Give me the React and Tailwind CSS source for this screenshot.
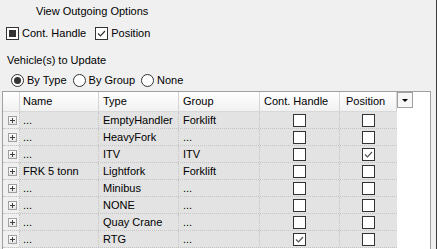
import React from 'react';

const rows = [
    { name: '...', type: 'EmptyHandler', group: 'Forklift', cont: false, pos: false },
    { name: '...', type: 'HeavyFork', group: '...', cont: false, pos: false },
    { name: '...', type: 'ITV', group: 'ITV', cont: false, pos: true },
    { name: 'FRK 5 tonn', type: 'Lightfork', group: 'Forklift', cont: false, pos: false },
    { name: '...', type: 'Minibus', group: '...', cont: false, pos: false },
    { name: '...', type: 'NONE', group: '...', cont: false, pos: false },
    { name: '...', type: 'Quay Crane', group: '...', cont: false, pos: false },
    { name: '...', type: 'RTG', group: '...', cont: true, pos: false },
];

const Check = ({ color = '#333' }) => (
    <svg width="11" height="11" viewBox="0 0 11 11" className="block">
        <path d="M2 5.5 L4.5 8 L9 3" fill="none" stroke={color} strokeWidth="1.2" />
    </svg>
);

const Box = ({ checked, mixed, markColor }) => (
    <div className="w-[13px] h-[13px] border border-[#333333] bg-white flex items-center justify-center shrink-0">
        {mixed && <div className="w-[7px] h-[7px] bg-[#333333]" />}
        {checked && <Check color={markColor} />}
    </div>
);

const Radio = ({ on }) => (
    <div className="w-[13px] h-[13px] rounded-full border border-[#333333] bg-white flex items-center justify-center shrink-0">
        {on && <div className="w-[7px] h-[7px] rounded-full bg-[#333333]" />}
    </div>
);

const Plus = () => (
    <div className="w-[9px] h-[9px] border border-[#a0a0a0] bg-gradient-to-b from-white to-[#e6e6e6] relative">
        <div className="absolute left-[1px] top-[3px] w-[5px] h-px bg-[#404040]" />
        <div className="absolute left-[3px] top-[1px] w-px h-[5px] bg-[#404040]" />
    </div>
);

const head = 'h-full border-r border-[#d5d5d5] flex items-center';

export default function App() {
    return (
        <div className="w-[437px] h-[249px] overflow-hidden bg-[#f0f0f0] flex font-['Liberation_Sans',Arial,sans-serif] text-[11px] leading-[13px] text-black">
            <div className="w-[436px] flex flex-col">
                <div className="pt-[5px] pl-[36px]">View Outgoing Options</div>

                <div className="mt-[9px] pl-[6px] flex items-center h-[13px]">
                    <Box mixed />
                    <span className="ml-[3px]">Cont. Handle</span>
                    <div className="ml-[9px]"><Box checked /></div>
                    <span className="ml-[3px]">Position</span>
                </div>

                <div className="mt-[14px] pl-[7px]">Vehicle(s) to Update</div>

                <div className="mt-[7px] pl-[11px] flex items-center h-[13px]">
                    <Radio on />
                    <span className="ml-[3px]">By Type</span>
                    <div className="ml-[6px]"><Radio /></div>
                    <span className="ml-[3px]">By Group</span>
                    <div className="ml-[6px]"><Radio /></div>
                    <span className="ml-[3px]">None</span>
                </div>

                <div className="mt-[4px] ml-[2px] w-[429px] h-[170px] shrink-0 border border-[#a0a0a0] bg-white flex">
                    <div className="w-[394px] flex flex-col">
                        <div className="h-[20px] flex border-b border-[#d8d8d8] bg-gradient-to-b from-white to-[#f1f1f1]">
                            <div className={`w-[17px] ${head}`} />
                            <div className={`w-[79px] pl-[3px] ${head}`}>Name</div>
                            <div className={`w-[80px] pl-[4px] ${head}`}>Type</div>
                            <div className={`w-[81px] pl-[4px] ${head}`}>Group</div>
                            <div className={`w-[80px] pl-[4px] ${head}`}>Cont. Handle</div>
                            <div className={`w-[57px] pl-[6px] ${head}`}>Position</div>
                        </div>
                        {rows.map((r, i) => (
                            <div key={i} className="h-[17px] flex border-b border-dotted border-[#c4c4c4] bg-[#e3e3e3]">
                                <div className="w-[17px] h-full bg-[#f0f0f0] border-r border-dotted border-[#c4c4c4] flex items-center pl-[5px]">
                                    <Plus />
                                </div>
                                <div className="w-[79px] h-full pl-[3px] border-r border-dotted border-[#c4c4c4] flex items-center">{r.name}</div>
                                <div className="w-[80px] h-full pl-[4px] border-r border-dotted border-[#c4c4c4] flex items-center">{r.type}</div>
                                <div className="w-[81px] h-full pl-[4px] border-r border-dotted border-[#c4c4c4] flex items-center">{r.group}</div>
                                <div className="w-[80px] h-full border-r border-dotted border-[#c4c4c4] flex items-center justify-center">
                                    <Box checked={r.cont} markColor="#555555" />
                                </div>
                                <div className="w-[57px] h-full flex items-center justify-center">
                                    <Box checked={r.pos} markColor="#555555" />
                                </div>
                            </div>
                        ))}
                    </div>
                    <div className="flex-1">
                        <div className="w-[16px] h-[16px] border border-[#a0a0a0] bg-[#f7f7f7] flex items-center justify-center">
                            <div className="w-0 h-0 border-l-[3px] border-r-[3px] border-t-[3px] border-l-transparent border-r-transparent border-t-black" />
                        </div>
                    </div>
                </div>
            </div>
            <div className="w-px h-full bg-[#3c3c3c]" />
        </div>
    );
}
